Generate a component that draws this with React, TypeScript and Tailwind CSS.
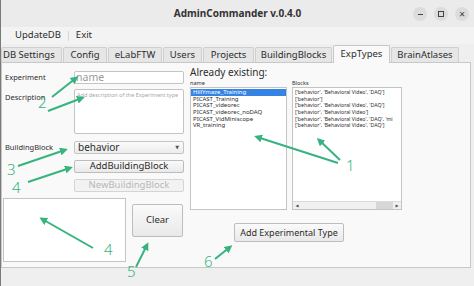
import React from "react";

const tabs = [
  { label: "DB Settings", w: "w-[61px]", pl: "justify-start pl-[1px]" },
  { label: "Config", w: "w-[44px]" },
  { label: "eLabFTW", w: "w-[54px]" },
  { label: "Users", w: "w-[39px]" },
  { label: "Projects", w: "w-[51px]" },
  { label: "BuildingBlocks", w: "w-[77px]" },
  { label: "ExpTypes", w: "w-[57px]", active: true },
  { label: "BrainAtlases", w: "w-[68px]" },
];

const names = [
  "HillYmaze_Training",
  "PICAST_Training",
  "PICAST_videorec",
  "PICAST_videorec_noDAQ",
  "PICAST_VidMiniscope",
  "VR_training",
];

const blocks = [
  "['behavior', 'Behavioral Video', 'DAQ']",
  "['behavior']",
  "['behavior', 'Behavioral Video', 'DAQ']",
  "['behavior', 'Behavioral Video']",
  "['behavior', 'Behavioral Video', 'DAQ', 'mi",
  "['behavior', 'Behavioral Video', 'DAQ']",
];

const arrows: [number, number, number, number][] = [
  [52, 97, 76, 78],
  [48, 111, 82, 98],
  [18, 166, 65, 150],
  [28, 182, 70, 168],
  [93, 248, 42, 219],
  [136, 267, 147, 245],
  [215, 259, 230, 247],
  [338, 163, 257, 137],
  [340, 160, 319, 140],
];

// annotation digits over the screenshot
const numbers = [
  { n: "2", x: "left-[37px] top-[95px]" },
  { n: "3", x: "left-[6px] top-[162px]" },
  { n: "4", x: "left-[11px] top-[180px]" },
  { n: "4", x: "left-[103px] top-[242px]" },
  { n: "5", x: "left-[126px] top-[264px]" },
  { n: "6", x: "left-[203px] top-[254px]" },
  { n: "1", x: "left-[345px] top-[158px]" },
];

function WinButton({ children }: { children: React.ReactNode }) {
  return (
    <div className="w-[14px] h-[14px] rounded-full bg-[#dcdcdc] flex items-center justify-center text-[#444]">
      {children}
    </div>
  );
}

function Button({ label, className = "", disabled = false }: { label: string; className?: string; disabled?: boolean }) {
  return (
    <div
      className={`flex items-center justify-center rounded-[2px] border ${
        disabled
          ? "border-[#d4d4d4] bg-[#f2f2f2] text-[#b8b8b8]"
          : "border-[#bdbdbd] bg-gradient-to-b from-[#fafafa] to-[#e9e9e9] text-[#2d2d2d]"
      } ${className}`}
    >
      {label}
    </div>
  );
}

export default function App() {
  return (
    <div className="relative w-[474px] h-[286px] overflow-hidden bg-[#efefef] border-l border-[#7a7a7a] font-['Noto_Sans','DejaVu_Sans',sans-serif] text-[#2d2d2d]">
      {/* title bar */}
      <div className="h-[27px] bg-[#ebebeb] grid grid-cols-[1fr_auto_1fr] items-center">
        <div />
        <div className="text-[10px] font-bold text-[#333]">AdminCommander v.0.4.0</div>
        <div className="flex justify-end gap-[7px] pr-[5px]">
          <WinButton>
            <div className="w-[5px] h-[1px] bg-[#444] mt-[2px]" />
          </WinButton>
          <WinButton>
            <div className="w-[6px] h-[6px] border border-[#444]" />
          </WinButton>
          <WinButton>
            <span className="text-[8px] leading-none">✕</span>
          </WinButton>
        </div>
      </div>

      {/* menu bar */}
      <div className="h-[17px] bg-[#f3f3f3] flex items-center text-[9.5px] pl-[14px]">
        <span>UpdateDB</span>
        <div className="w-[1px] h-[10px] bg-[#d6d6d6] mx-[7px]" />
        <span>Exit</span>
      </div>

      {/* tabs */}
      <div className="h-[18px] bg-[#efefef] flex items-end gap-[1px] text-[9.5px]">
        {tabs.map((t) => (
          <div
            key={t.label}
            className={`${t.w} flex items-center ${t.pl ?? "justify-center"} border border-b-0 rounded-t-[2px] ${
              t.active
                ? "h-[18px] bg-[#f9f9f9] border-[#c8c8c8] relative top-[1px] z-10"
                : "h-[15px] bg-[#e6e6e6] border-[#cfcfcf]"
            }`}
          >
            {t.label}
          </div>
        ))}
      </div>

      {/* pane */}
      <div className="w-[470px] h-[206px] bg-[#f9f9f9] border border-[#c8c8c8] flex">
        {/* left column */}
        <div className="w-[183px] flex flex-col pt-[8px] pl-[1px]">
          <div className="flex items-center h-[13px]">
            <div className="w-[71px] pl-[2px] text-[7.5px]">Experiment</div>
            <div className="w-[110px] h-[13px] bg-white border border-[#c4c4c4] rounded-[2px] flex items-center pl-[1px] text-[10.5px] text-[#9a9a9a]">
              name
            </div>
          </div>
          <div className="flex mt-[5px]">
            <div className="w-[71px] pl-[2px] pt-[3px] text-[7.5px]">Description</div>
            <div className="w-[110px] h-[45px] bg-white border border-[#c4c4c4] rounded-[2px] px-[2px] pt-[2px] text-[5.5px] leading-[7px] text-[#a8a8a8] whitespace-nowrap overflow-hidden">
              Add description of the Experiment type
            </div>
          </div>
          <div className="flex items-center mt-[7px]">
            <div className="w-[71px] pl-[2px] text-[7.5px]">BuildingBlock</div>
            <div className="w-[110px] h-[13px] bg-gradient-to-b from-[#fafafa] to-[#ececec] border border-[#c4c4c4] rounded-[2px] flex items-center justify-between pl-[3px] pr-[4px] text-[10px]">
              <span>behavior</span>
              <span className="text-[5px] text-[#555]">▼</span>
            </div>
          </div>
          <div className="flex mt-[6px]">
            <div className="w-[71px]" />
            <Button label="AddBuildingBlock" className="w-[110px] h-[13px] text-[9.5px]" />
          </div>
          <div className="flex mt-[6px]">
            <div className="w-[71px]" />
            <Button label="NewBuildingBlock" disabled className="w-[110px] h-[13px] text-[9.5px]" />
          </div>
          <div className="flex mt-[6px]">
            <div className="w-[123px] h-[64px] bg-white border border-[#c4c4c4]" />
            <Button label="Clear" className="w-[51px] h-[33px] ml-[6px] mt-[6px] text-[9.5px]" />
          </div>
        </div>

        {/* right column */}
        <div className="flex flex-col pl-[5px] pt-[3px]">
          <div className="text-[10px] leading-[12px]">Already existing:</div>
          <div className="flex gap-[5px] mt-[1px]">
            <div className="flex flex-col">
              <div className="text-[5.5px] leading-[8px]">name</div>
              <div className="w-[97px] h-[123px] bg-white border border-[#c4c4c4] pt-[1px] text-[6px] leading-[6.7px]">
                {names.map((n, i) => (
                  <div
                    key={n}
                    className={`px-[2px] h-[6.7px] whitespace-nowrap ${
                      i === 0 ? "bg-[#3584e4] text-white" : ""
                    }`}
                  >
                    {n}
                  </div>
                ))}
              </div>
            </div>
            <div className="flex flex-col">
              <div className="text-[5.5px] leading-[8px]">Blocks</div>
              <div className="w-[110px] h-[123px] bg-white border border-[#c4c4c4] flex flex-col">
                <div className="flex-1 pt-[1px] text-[5.2px] leading-[6.7px] overflow-hidden">
                  {blocks.map((b, i) => (
                    <div key={i} className="px-[2px] h-[6.7px] whitespace-nowrap overflow-hidden">
                      {b}
                    </div>
                  ))}
                </div>
                <div className="h-[8px] flex items-stretch border-t border-[#dcdcdc] bg-[#f0f0f0]">
                  <div className="w-[8px] flex items-center justify-center text-[4px] text-[#555]">◀</div>
                  <div className="flex-1 flex justify-end">
                    <div className="w-[17px] bg-[#d7d7d7]" />
                  </div>
                  <div className="w-[8px] flex items-center justify-center text-[4px] text-[#555]">▶</div>
                </div>
              </div>
            </div>
          </div>
          <Button label="Add Experimental Type" className="w-[110px] h-[19px] ml-[44px] mt-[13px] text-[9px]" />
        </div>
      </div>

      {/* annotations */}
      <svg className="absolute left-0 top-0 pointer-events-none" width="474" height="286">
        <defs>
          <marker id="ah" markerWidth="4" markerHeight="4" refX="2.5" refY="2" orient="auto">
            <path d="M0,0 L4,2 L0,4 Z" fill="#36b37e" />
          </marker>
        </defs>
        {arrows.map(([x1, y1, x2, y2], i) => (
          <line
            key={i}
            x1={x1 - 1}
            y1={y1}
            x2={x2 - 1}
            y2={y2}
            stroke="#36b37e"
            strokeWidth="2"
            markerEnd="url(#ah)"
          />
        ))}
      </svg>
      {numbers.map((n, i) => (
        <span
          key={i}
          className={`absolute ${n.x} text-[15px] leading-[15px] font-light text-[#36b37e]`}
        >
          {n.n}
        </span>
      ))}
    </div>
  );
}
